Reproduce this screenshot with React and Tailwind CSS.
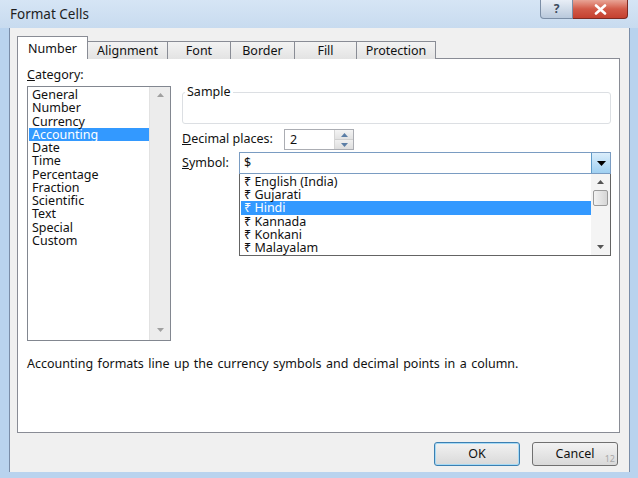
import React from 'react';

const FONT = { fontFamily: '"Noto Sans", "Segoe UI", sans-serif' };

const CATEGORIES = ['General', 'Number', 'Currency', 'Accounting', 'Date', 'Time', 'Percentage', 'Fraction', 'Scientific', 'Text', 'Special', 'Custom'];
const SYMBOLS = ['English (India)', 'Gujarati', 'Hindi', 'Kannada', 'Konkani', 'Malayalam'];
const TABS = [
  { label: 'Number', w: 'w-[71px]' },
  { label: 'Alignment', w: 'w-[81px]' },
  { label: 'Font', w: 'w-[64px]' },
  { label: 'Border', w: 'w-[65px]' },
  { label: 'Fill', w: 'w-[63px]' },
  { label: 'Protection', w: 'w-[80px]' },
];

function Arrow({ up, className = '' }) {
  return (
    <svg width="7" height="4" viewBox="0 0 7 4" className={className}>
      <path d={up ? 'M0 4 L3.5 0 L7 4 Z' : 'M0 0 L3.5 4 L7 0 Z'} fill="currentColor" />
    </svg>
  );
}

export default function App() {
  return (
    <div className="w-[638px] h-[478px] bg-[#b9d3ee] flex flex-col overflow-hidden text-[#111] text-[12.5px]" style={FONT}>
      {/* Title bar */}
      <div className="h-[28px] flex items-start bg-gradient-to-b from-[#d6e5f5] to-[#c8dbef] pl-[10px] pr-[10px]">
        <span className="mt-[5px] text-[13.5px] leading-[18px] text-[#1e1e1e]">Format Cells</span>
        <div className="flex-1" />
        <div className="flex">
          <div className="w-[33px] h-[19px] flex items-center justify-center rounded-bl-[4px] border border-t-0 border-[#7b8ea6] bg-gradient-to-b from-[#e8eef6] to-[#b9c9dc] text-[#3c4a5c] text-[12px] font-bold leading-none">?</div>
          <div className="w-[55px] h-[19px] flex items-center justify-center rounded-br-[4px] border border-t-0 border-l-0 border-[#7d2a22] bg-gradient-to-b from-[#e8a496] via-[#d25a48] to-[#c4402f]">
            <svg width="13" height="11" viewBox="0 0 13 11">
              <path d="M2 1.5 L11 9.5 M11 1.5 L2 9.5" stroke="#fff" strokeWidth="2.6" strokeLinecap="round" />
            </svg>
          </div>
        </div>
      </div>

      {/* Body */}
      <div className="ml-[9px] mr-[8px] h-[444px] bg-[#f0f0f0] border-l border-r border-[#7a8da8] pl-[7px] pr-[9px] pt-[8px] flex flex-col">
        {/* Tabs */}
        <div className="flex items-end h-[23px] -mb-px relative z-10">
          {TABS.map((t, i) => (
            <div
              key={t.label}
              className={`${t.w} flex items-center justify-center border border-b-0 border-[#898c95] ${
                i === 0 ? 'h-[23px] bg-white pt-[1px]' : 'h-[18px] bg-gradient-to-b from-[#f3f3f3] to-[#e3e3e3] -ml-px border-b border-b-[#898c95]'
              }`}
            >
              <span className="leading-[14px]">{t.label}</span>
            </div>
          ))}
        </div>

        {/* Panel */}
        <div className="h-[375px] bg-white border border-[#898c95] flex flex-col">
          <div className="flex">
            {/* Category column */}
            <div className="pl-[9px] pt-[8px] w-[153px]">
              <div className="leading-[16px] h-[16px] mb-[3px]"><span className="underline">C</span>ategory:</div>
              <div className="w-[144px] h-[255px] border border-[#828790] flex">
                <div className="flex-1 pt-[1px] pl-[1px]">
                  {CATEGORIES.map((c) => (
                    <div key={c} className={`h-[13.27px] leading-[13.27px] pl-[3px] ${c === 'Accounting' ? 'bg-[#3399ff] text-white' : ''}`}>{c}</div>
                  ))}
                </div>
                <div className="w-[21px] bg-[#ececec] border-l border-[#e2e2e2] flex flex-col items-center justify-between pt-[6px] pb-[8px] text-[#a0a0a0]">
                  <Arrow up />
                  <Arrow />
                </div>
              </div>
            </div>

            {/* Right column */}
            <div className="ml-[11px] pt-[26px] w-[429px]">
              <fieldset className="h-[39px] border border-[#dcdfe3] rounded-[3px] pl-[2px]">
                <legend className="px-[2px] leading-[14px]">Sample</legend>
              </fieldset>

              <div className="flex items-center mt-[5px] h-[21px]">
                <div className="w-[102px]"><span className="underline">D</span>ecimal places:</div>
                <div className="w-[70px] h-[21px] border border-[#abadb3] flex">
                  <div className="flex-1 pl-[5px] leading-[19px]">2</div>
                  <div className="w-[19px] flex flex-col border-l border-[#d5d5d5]">
                    <div className="flex-1 flex items-center justify-center bg-gradient-to-b from-[#f4f4f4] to-[#e2e2e2] border-b border-[#d0d0d0] text-[#5b7ea6]"><Arrow up /></div>
                    <div className="flex-1 flex items-center justify-center bg-gradient-to-b from-[#f0f0f0] to-[#dedede] text-[#5b7ea6]"><Arrow /></div>
                  </div>
                </div>
              </div>

              <div className="flex mt-[2px]">
                <div className="w-[57px] leading-[22px]"><span className="underline">S</span>ymbol:</div>
                <div className="w-[372px] flex flex-col">
                  <div className="h-[22px] border border-[#7a9cc2] flex">
                    <div className="flex-1 pl-[4px] leading-[20px]">$</div>
                    <div className="w-[19px] flex items-center justify-center bg-gradient-to-b from-[#dbeefb] to-[#9fd0f1] border-l border-[#5e9bc9]">
                      <svg width="9" height="5" viewBox="0 0 9 5"><path d="M0 0 L4.5 5 L9 0 Z" fill="#000" /></svg>
                    </div>
                  </div>
                  <div className="h-[82px] border border-t-0 border-[#646464] flex">
                    <div className="flex-1 pt-[1px] pl-[1px]">
                      {SYMBOLS.map((s) => (
                        <div key={s} className={`h-[13.2px] leading-[13.2px] pl-[3px] ${s === 'Hindi' ? 'bg-[#3399ff] text-white' : ''}`}>₹ {s}</div>
                      ))}
                    </div>
                    <div className="w-[19px] bg-[#f4f4f4] flex flex-col items-center pt-[6px] pb-[6px] text-[#555]">
                      <Arrow up />
                      <div className="w-[15px] h-[16px] mt-[6px] border border-[#9a9a9a] rounded-[2px] bg-gradient-to-r from-[#f2f2f2] to-[#d6d6d6]" />
                      <div className="flex-1" />
                      <Arrow />
                    </div>
                  </div>
                </div>
              </div>
            </div>
          </div>

          <p className="pl-[9px] mt-[15px] leading-[16px] [word-spacing:1.2px]">Accounting formats line up the currency symbols and decimal points in a column.</p>
        </div>

        {/* Buttons */}
        <div className="flex justify-end gap-[12px] mt-[9px] pr-[2px]">
          <button className="w-[86px] h-[24px] rounded-[3px] border border-[#3c7fb1] bg-gradient-to-b from-[#f2f2f2] to-[#d9d9d9] shadow-[inset_0_0_0_1px_#a6daf5]">OK</button>
          <button className="relative w-[86px] h-[24px] rounded-[3px] border border-[#707070] bg-gradient-to-b from-[#f2f2f2] to-[#d9d9d9]">
            Cancel
            <span className="absolute right-[2px] bottom-[1px] text-[9px] leading-[10px] text-[#a8a8a8]">12</span>
          </button>
        </div>
      </div>
    </div>
  );
}
